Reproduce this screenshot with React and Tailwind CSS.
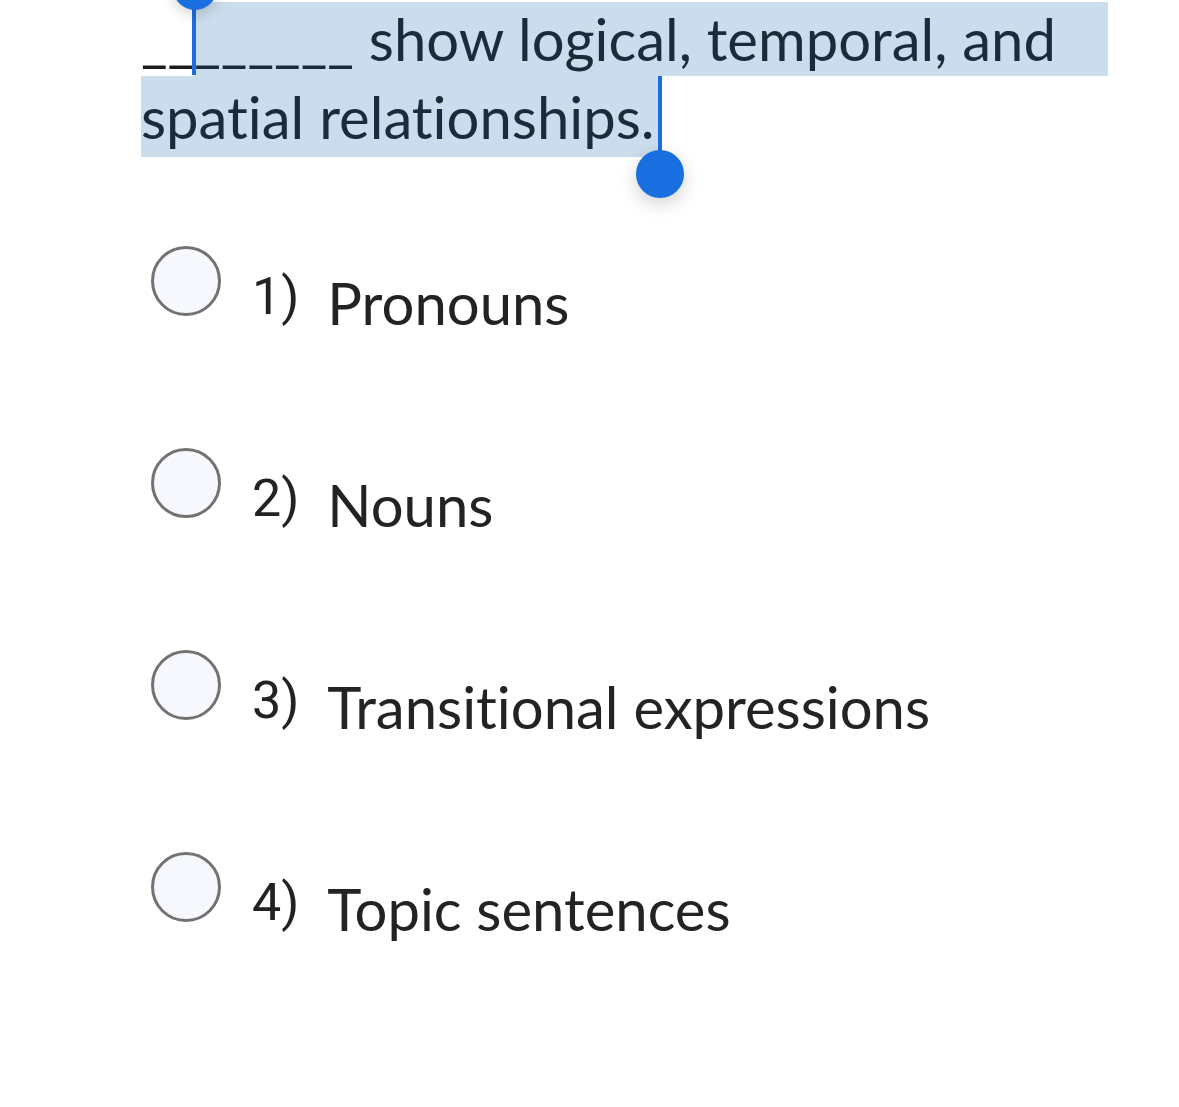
import React from 'react';

const options = [
  { n: '1)', label: 'Pronouns' },
  { n: '2)', label: 'Nouns' },
  { n: '3)', label: 'Transitional expressions' },
  { n: '4)', label: 'Topic sentences' },
];

export default function App() {
  return (
    <div
      className="w-[1179px] h-[1107px] bg-white overflow-hidden relative [font-variant-ligatures:none]"
      style={{ fontFamily: 'Lato, "Noto Sans", sans-serif' }}
    >
      {/* question with selection */}
      <div className="relative pl-[141px] pt-[2px] text-[58px] text-[#1c2b3c]">
        <div className="flex h-[74px] items-center leading-none">
          <span className="text-[#1c1c1c]">__</span>
          <span className="bg-[#cbdcec] h-[74px] w-[914px] flex items-center">______ show logical, temporal, and</span>
        </div>
        <div className="h-[81px] w-[519px] bg-[#cbdcec] flex items-center leading-none">spatial relationships.</div>

        {/* start handle */}
        <div className="absolute left-[192px] top-0 w-[4px] h-[75px] bg-[#1a6fe0]" />
        <div className="absolute left-[173px] top-[-34px] w-[44px] h-[44px] rounded-full bg-[#1a6fe0] shadow-[0_4px_14px_rgba(0,0,0,0.18)]" />
        {/* end handle */}
        <div className="absolute left-[658px] top-[76px] w-[4px] h-[90px] bg-[#1a6fe0]" />
        <div className="absolute left-[636px] top-[150px] w-[48px] h-[48px] rounded-full bg-[#1a6fe0] shadow-[0_6px_18px_rgba(0,0,0,0.18)]" />
      </div>

      {/* options */}
      <div className="flex flex-col pt-[89px]">
        {options.map((o) => (
          <div key={o.n} className="flex items-start h-[202px]">
            <div className="ml-[151px] w-[70px] h-[70px] rounded-full border-[3px] border-[#727272] bg-[#f6f8fd] shrink-0" />
            <span
              className="ml-[31px] mt-[25px] text-[52px] leading-none text-[#222]"
              style={{ fontFamily: 'Roboto, sans-serif' }}
            >
              {o.n}
            </span>
            <span className="ml-[28px] mt-[28px] text-[58px] leading-none text-[#232323]">{o.label}</span>
          </div>
        ))}
      </div>
    </div>
  );
}
